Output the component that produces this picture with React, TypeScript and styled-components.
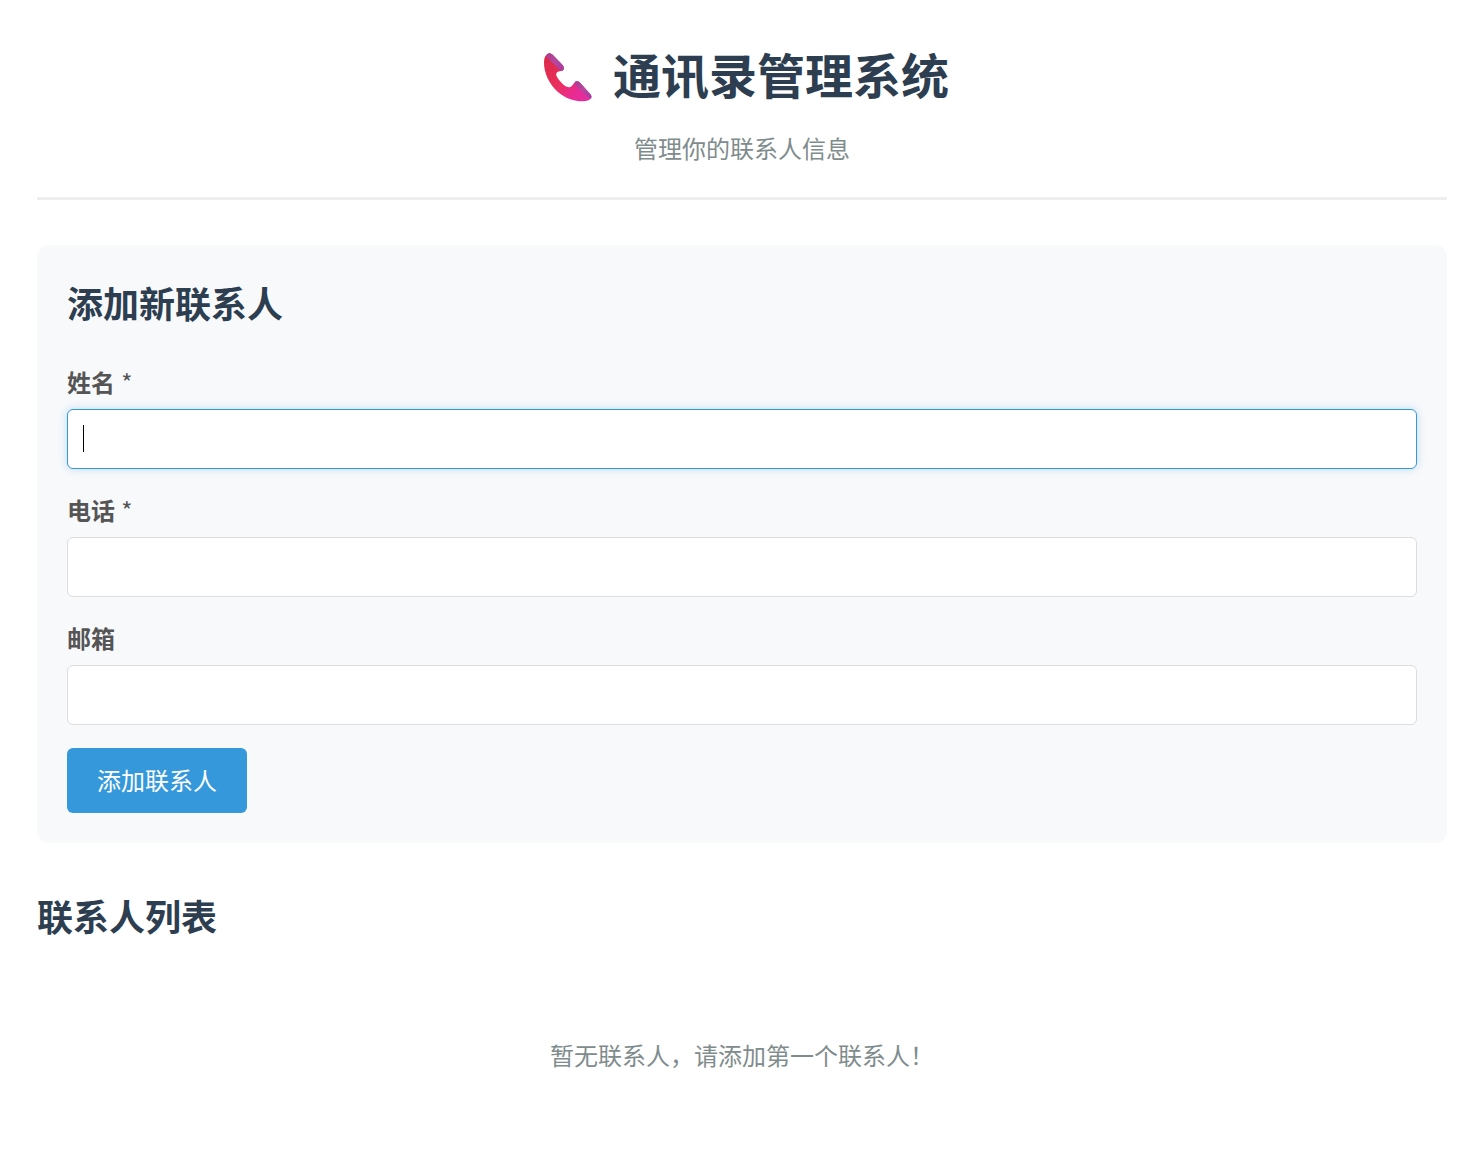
import React, { useState } from "react";
import styled, { createGlobalStyle } from "styled-components";

const GlobalStyle = createGlobalStyle`
  *, *::before, *::after { box-sizing: border-box; }
  body {
    margin: 0;
    background: #fff;
    color: #2c3e50;
    font-family: "Open Sans", "Noto Sans CJK SC", sans-serif;
    font-size: 24px;
    line-height: 38px;
  }
`;

const Page = styled.main`
  padding: 37px 19px 30px 37px;
`;

const Header = styled.header`
  padding-bottom: 29px;
  margin-bottom: 45px;
  border-bottom: 3px solid #eee;
  text-align: center;
`;

const Title = styled.h1`
  display: flex;
  justify-content: center;
  align-items: center;
  gap: 12px;
  margin: 0 0 16px;
  font-size: 48px;
  line-height: 77px;
`;

const PhoneIcon = styled.svg`
  width: 66px;
  height: 60px;
`;

const Subtitle = styled.p`
  margin: 0;
  color: #7f8c8d;
`;

const FormCard = styled.form`
  padding: 30px;
  margin-bottom: 45px;
  border-radius: 12px;
  background: #f8f9fb;
`;

const SectionTitle = styled.h2`
  margin: 0 0 29px;
  font-size: 36px;
  line-height: 60px;
`;

const Field = styled.div`
  display: flex;
  flex-direction: column;
  gap: 7px;
  margin-bottom: 23px;
`;

const Label = styled.label`
  color: #555;
  font-weight: 700;
`;

const Required = styled.span`
  font-family: "Noto Sans CJK SC", sans-serif;
  font-weight: 400;
  line-height: 1;
`;

const Input = styled.input`
  width: 100%;
  height: 60px;
  padding: 0 15px;
  border: 1px solid #ddd;
  border-radius: 6px;
  background: #fff;
  color: #000;
  font: inherit;

  &:focus {
    outline: none;
    border-color: #3498db;
    box-shadow: 0 0 8px rgba(52, 152, 219, 0.3);
  }

  /* A steady caret while the focused box is still empty. */
  &:focus:placeholder-shown {
    caret-color: transparent;
    background: linear-gradient(#000, #000) 15px 15px / 1px 27px no-repeat #fff;
  }
`;

const SubmitButton = styled.button`
  display: block;
  padding: 14px 30px 13px;
  border: none;
  border-radius: 6px;
  background: #3498db;
  color: #fff;
  font: inherit;
  cursor: pointer;
`;

const EmptyState = styled.p`
  margin: 0;
  padding: 60px;
  color: #7f8c8d;
  text-align: center;
`;

const ContactList = styled.ul`
  margin: 0;
  padding: 0;
  list-style: none;
`;

type FieldName = "name" | "phone" | "email";
type Contact = Record<FieldName, string>;

const fields: { name: FieldName; label: string; type: string; required: boolean }[] = [
  { name: "name", label: "姓名", type: "text", required: true },
  { name: "phone", label: "电话", type: "tel", required: true },
  { name: "email", label: "邮箱", type: "email", required: false },
];

const blank: Contact = { name: "", phone: "", email: "" };

function Phone() {
  return (
    <PhoneIcon viewBox="15 17 198 180" aria-hidden="true">
      <defs>
        <linearGradient id="handle" x1="45" y1="60" x2="175" y2="180" gradientUnits="userSpaceOnUse">
          <stop offset="0" stopColor="#dc2a48" />
          <stop offset="0.45" stopColor="#ea305f" />
          <stop offset="0.75" stopColor="#ea2a94" />
          <stop offset="1" stopColor="#e0309f" />
        </linearGradient>
        <linearGradient id="cap" x1="0" y1="0" x2="1" y2="1">
          <stop offset="0" stopColor="#a93d91" />
          <stop offset="0.5" stopColor="#b6479f" />
          <stop offset="1" stopColor="#a43c9f" />
        </linearGradient>
      </defs>
      <path
        d="M50 43C44 47 42 56 42 67C42 98 58 132 83 154C105 174 133 183 158 183C171 183 179 180 183 174C186 169 184 164 180 160L151 128C146 122 138 121 133 127C127 135 123 142 116 141C106 139 98 132 90 122C81 111 76 102 80 97C84 92 93 94 99 90C104 86 102 78 97 73L68 43C62 37 55 37 50 43Z"
        fill="url(#handle)"
      />
      <path d="M50 43C55 37 62 37 68 43L97 73C102 78 104 86 99 90C96 93 91 90 86 85L53 53C49 49 48 46 50 43Z" fill="url(#cap)" />
      <path d="M134 127C138 121 146 122 151 128L180 160C184 164 186 169 183 174C180 176 174 171 168 165L138 137C135 133 133 131 134 127Z" fill="url(#cap)" />
    </PhoneIcon>
  );
}

export default function App() {
  const [draft, setDraft] = useState<Contact>(blank);
  const [contacts, setContacts] = useState<Contact[]>([]);

  const submit = (event: React.FormEvent) => {
    event.preventDefault();
    setContacts([...contacts, draft]);
    setDraft(blank);
  };

  return (
    <>
      <GlobalStyle />
      <Page>
        <Header>
          <Title>
            <Phone />
            <span>通讯录管理系统</span>
          </Title>
          <Subtitle>管理你的联系人信息</Subtitle>
        </Header>
        <FormCard onSubmit={submit}>
          <SectionTitle>添加新联系人</SectionTitle>
          {fields.map((field, index) => (
            <Field key={field.name}>
              <Label htmlFor={field.name}>
                {field.label}
                {field.required && <> <Required>*</Required></>}
              </Label>
              <Input
                id={field.name}
                type={field.type}
                required={field.required}
                placeholder=" "
                autoFocus={index === 0}
                value={draft[field.name]}
                onChange={(event) => setDraft({ ...draft, [field.name]: event.target.value })}
              />
            </Field>
          ))}
          <SubmitButton type="submit">添加联系人</SubmitButton>
        </FormCard>
        <section>
          <SectionTitle>联系人列表</SectionTitle>
          {contacts.length === 0 ? (
            <EmptyState>暂无联系人，请添加第一个联系人！</EmptyState>
          ) : (
            <ContactList>
              {contacts.map((contact, index) => (
                <li key={index}>
                  {contact.name} {contact.phone} {contact.email}
                </li>
              ))}
            </ContactList>
          )}
        </section>
      </Page>
    </>
  );
}
